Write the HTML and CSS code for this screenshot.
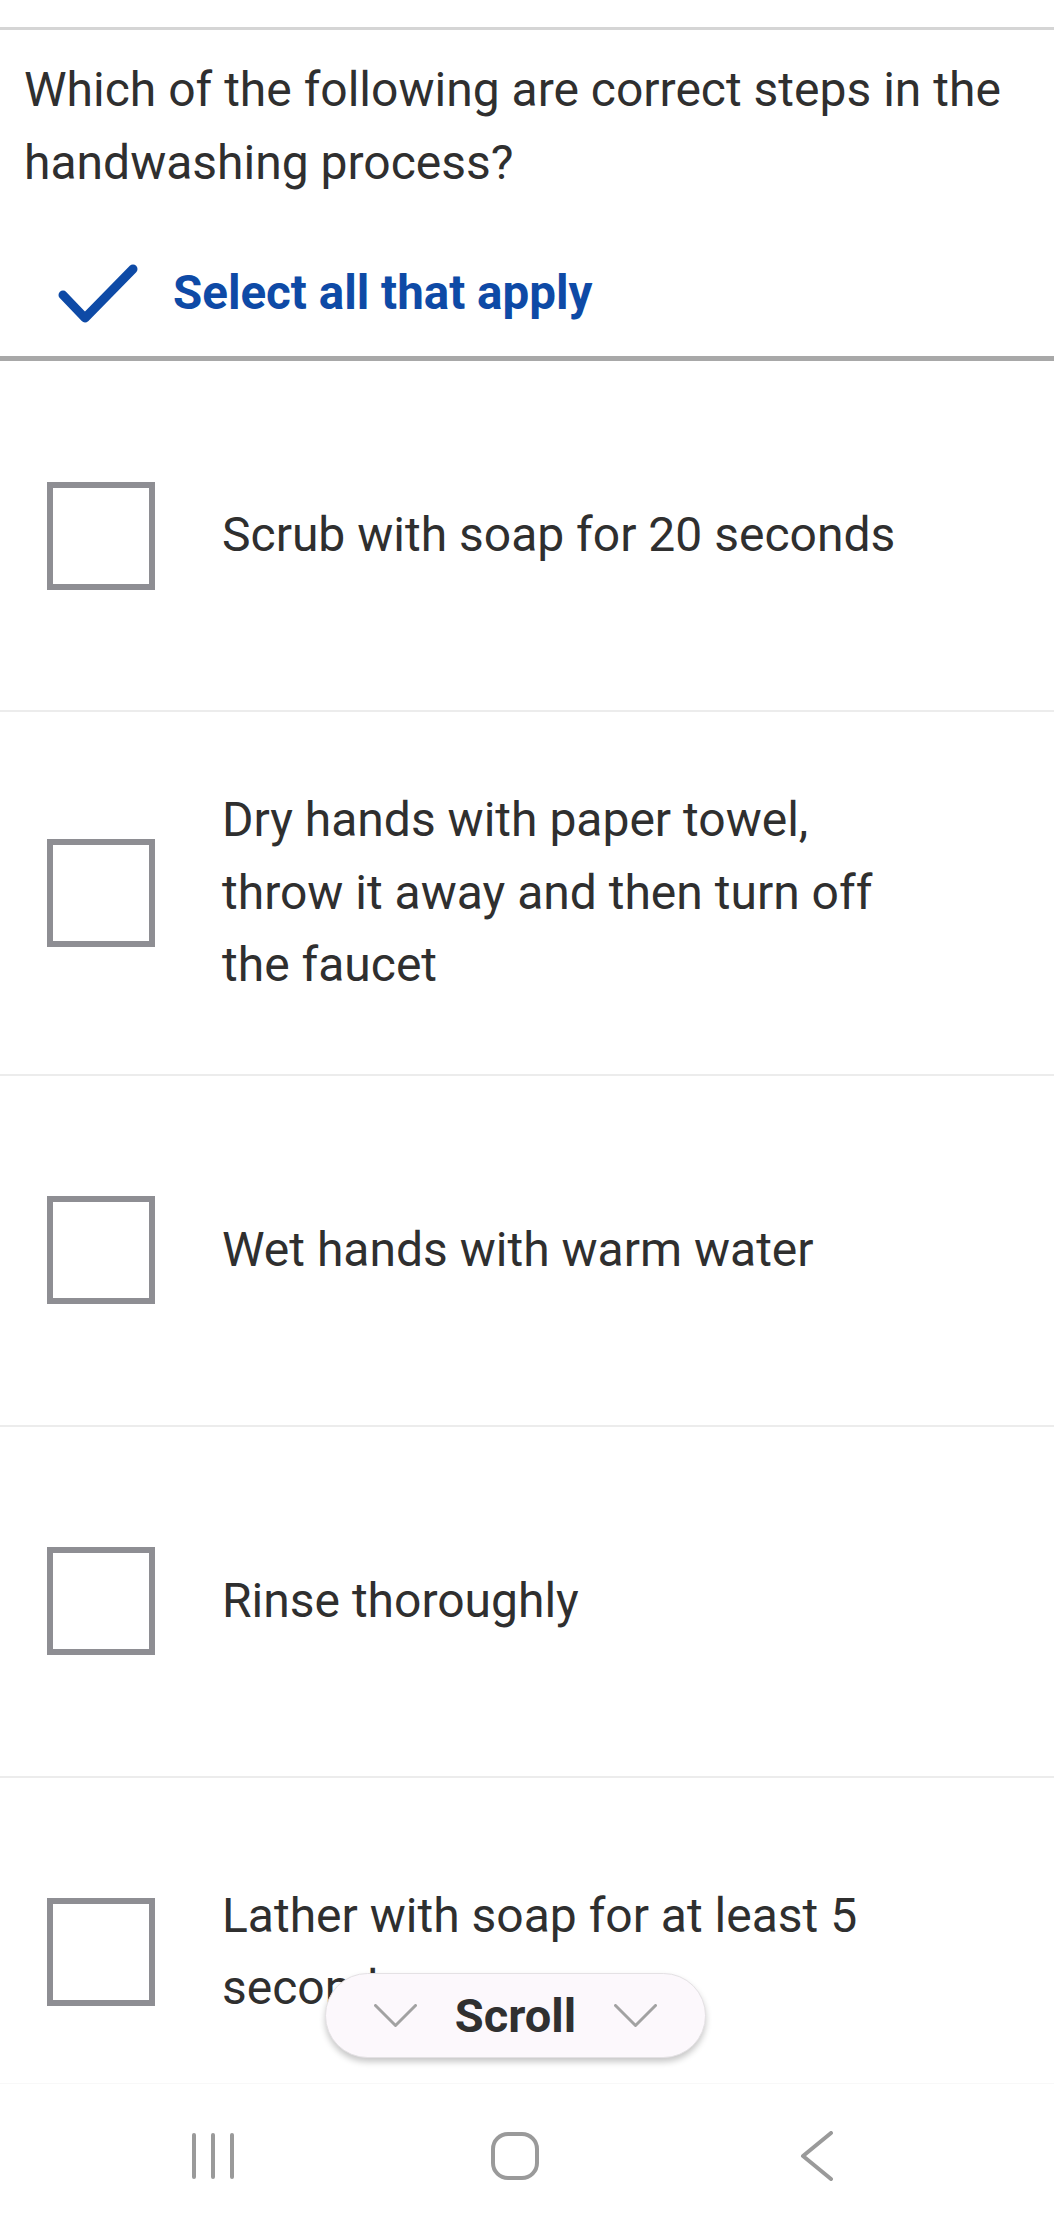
FILE: index.html
```html
<!DOCTYPE html>
<html lang="en">
   <head>
      <meta charset="UTF-8">
      <meta name="viewport" content="width=device-width, initial-scale=1.0">
      <title>Handwashing quiz</title>
      <link rel="stylesheet" href="styles.css">
   </head>
   <body>
      <div class="screen">
         <main class="quiz">
            <div class="question">
               <p class="question-text">Which of the following are correct steps in the handwashing process?</p>
               <div class="instruction">
                  <svg class="check-icon" width="80" height="60" viewBox="0 0 80 60">
                     <polyline points="5,32 27,55 75,6" />
                  </svg>
                  <span>Select all that apply</span>
               </div>
            </div>
            <ul class="options">
               <li class="option"><span class="checkbox"></span><span class="option-label">Scrub with soap for 20 seconds</span></li>
               <li class="option"><span class="checkbox"></span><span class="option-label">Dry hands with paper towel, throw it away and then turn off the faucet</span></li>
               <li class="option"><span class="checkbox"></span><span class="option-label">Wet hands with warm water</span></li>
               <li class="option"><span class="checkbox"></span><span class="option-label">Rinse thoroughly</span></li>
               <li class="option"><span class="checkbox"></span><span class="option-label">Lather with soap for at least 5 seconds</span></li>
            </ul>
         </main>

         <!-- floating scroll hint, sits over the list -->
         <button class="scroll-pill">
            <svg class="chevron" width="43" height="23" viewBox="0 0 43 23"><polyline points="1.5,1.5 21.5,21.5 41.5,1.5" /></svg>
            <span>Scroll</span>
            <svg class="chevron" width="43" height="23" viewBox="0 0 43 23"><polyline points="1.5,1.5 21.5,21.5 41.5,1.5" /></svg>
         </button>

         <nav class="navbar">
            <div class="nav-btn">
               <svg width="44" height="48" viewBox="0 0 44 48">
                  <line x1="3" y1="3" x2="3" y2="45" />
                  <line x1="22" y1="3" x2="22" y2="45" />
                  <line x1="41" y1="3" x2="41" y2="45" />
               </svg>
            </div>
            <div class="nav-btn">
               <svg width="48" height="48" viewBox="0 0 48 48">
                  <rect x="2" y="2" width="44" height="44" rx="15" />
               </svg>
            </div>
            <div class="nav-btn">
               <svg width="34" height="50" viewBox="0 0 34 50">
                  <polyline points="31,2 3,25 31,48" />
               </svg>
            </div>
         </nav>
      </div>
   </body>
</html>
```

FILE: styles.css
```css
/* quiz screen */
* {
box-sizing: border-box;
}
body {
margin: 0;
background-color: #ffffff;
font-family: Roboto, "Noto Sans", Arial, sans-serif;
color: #2f2f2f;
}
.screen {
position: relative;
width: 1054px;
height: 2227px;
display: flex;
flex-direction: column;
overflow: hidden;
}
.quiz {
flex: 1;
overflow: hidden;
padding-top: 27px;
}
.question {
border-top: 3px solid #d5d5d5;
border-bottom: 5px solid #a8a8a8;
padding: 24px 24px 27px 24px;
}
.question-text {
margin: 0;
font-size: 48px;
line-height: 72.5px;
}
.instruction {
display: flex;
align-items: center;
gap: 35px;
margin-top: 58px;
padding-left: 34px;
height: 72px;
color: #0e4aa6;
font-size: 47.5px;
font-weight: 700;
}
.check-icon polyline {
fill: none;
stroke: #0e4aa6;
stroke-width: 9;
stroke-linecap: round;
stroke-linejoin: round;
}
.options {
list-style: none;
margin: 0;
padding: 0;
}
.option {
display: flex;
align-items: center;
gap: 67px;
min-height: 351px;
padding: 72px 130px 72px 47px;
border-bottom: 2px solid #ececec;
}
.checkbox {
flex: none;
width: 108px;
height: 108px;
border: 6px solid #8e8e93;
}
.option-label {
font-size: 48px;
line-height: 72.5px;
}
.scroll-pill {
position: absolute;
left: 325px;
top: 1973px;
width: 381px;
height: 85px;
display: flex;
align-items: center;
justify-content: center;
gap: 38px;
padding: 0;
border: 1px solid #e4e1e4;
border-radius: 43px;
background-color: #fcf8fc;
box-shadow: 0 4px 6px rgba(0, 0, 0, 0.22);
font-family: Roboto, Arial, sans-serif;
font-size: 47px;
font-weight: 700;
color: #303030;
}
.chevron polyline {
fill: none;
stroke: #a2a2a2;
stroke-width: 3;
stroke-linecap: round;
stroke-linejoin: round;
}
.navbar {
flex: none;
height: 144px;
display: flex;
justify-content: center;
align-items: center;
padding-right: 24px;
background-color: #ffffff;
border-top: 1px solid #f8f8f8;
}
.nav-btn {
width: 302px;
display: flex;
justify-content: center;
}
.nav-btn svg {
fill: none;
stroke: #9a9a9a;
stroke-width: 4;
stroke-linecap: round;
stroke-linejoin: round;
}
```
